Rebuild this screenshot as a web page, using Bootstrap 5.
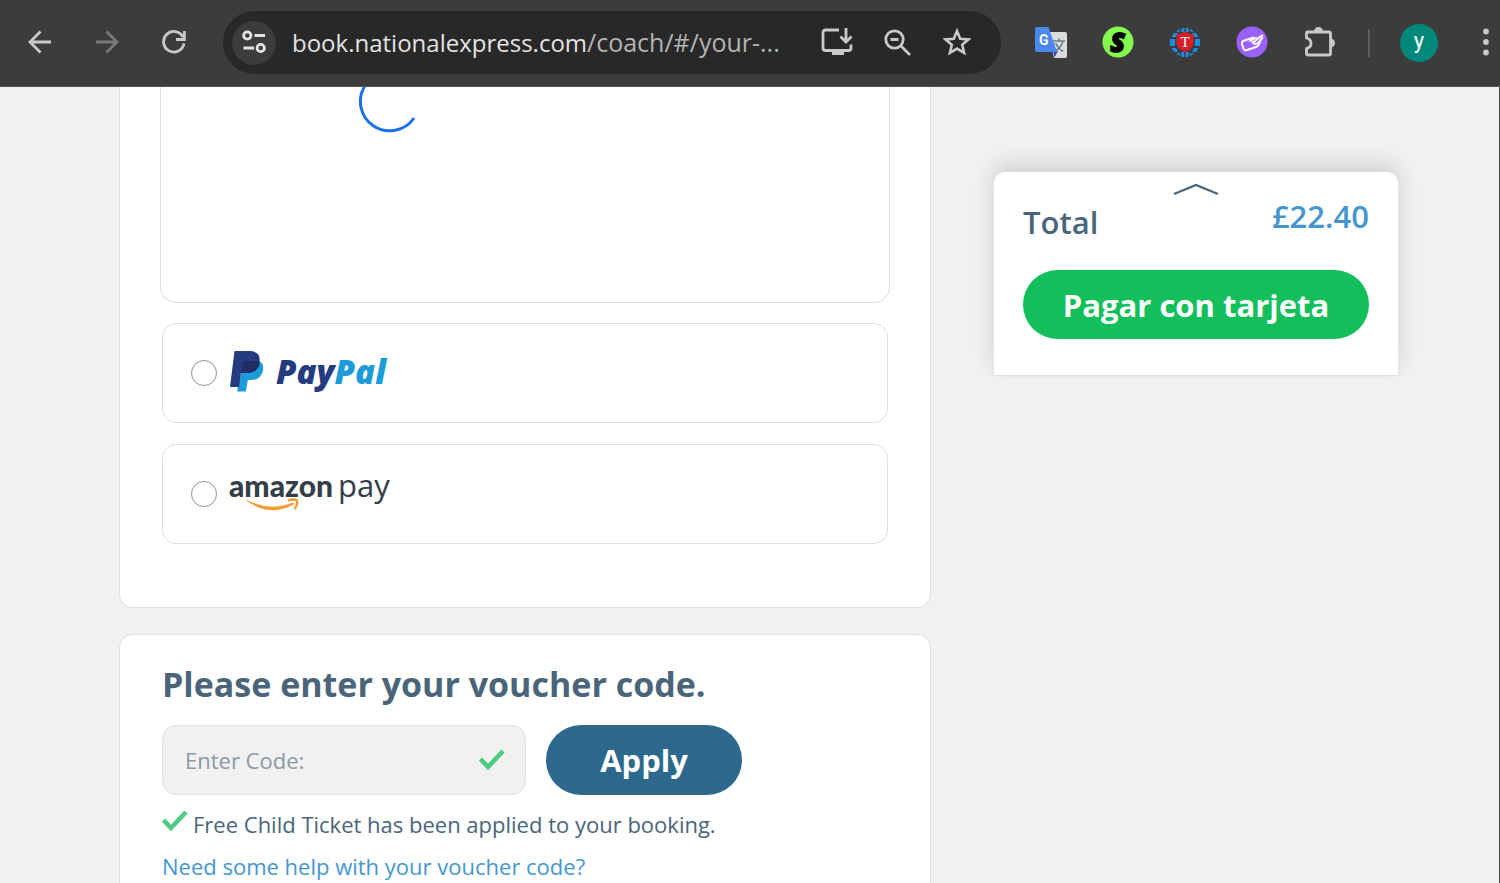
<!DOCTYPE html>
<html lang="en">
<head>
<meta charset="utf-8">
<meta name="viewport" content="width=device-width, initial-scale=1">
<title>National Express – payment</title>
<link href="https://cdn.jsdelivr.net/npm/bootstrap@5.3.0/dist/css/bootstrap.min.css" rel="stylesheet">
<style>
  body { background: #f1f1f1; color: #4a657a; font-family: "Open Sans", sans-serif; font-size: 22px; line-height: 32px; }
  svg { display: block; flex: none; }

  /* browser toolbar */
  .toolbar { background: #3c3c3c; padding: 11px 0 12px 6px; border-bottom: 1px solid #555; }
  .tool { width: 67px; height: 62px; padding: 0 0 1px; border: 0; background: none; color: #c9c9c9; display: flex; align-items: center; justify-content: center; flex: none; }
  .tool-menu { width: 28px; }
  .tool-off { color: #7a7a7a; }
  .address { background: #282828; border-radius: 32px; margin: 0 16px; padding: 0 14px 0 9px; height: 63px; min-width: 0; }
  .address .tool { width: 60px; }
  .address .site-info { width: 44px; height: 44px; border-radius: 50%; background: #3c3c3c; color: #e3e3e3; }
  .url { color: #e3e3e3; font-size: 24px; line-height: 36px; margin-left: 16px; white-space: nowrap; overflow: hidden; }
  .url span { color: #b4b4b4; font-size: 25px; }
  .tool-rule { width: 2px; height: 28px; background: #5c5c5c; margin: 0 30px 0 16px; flex: none; }
  .avatar { width: 38px; height: 38px; border-radius: 50%; border: 0; background: #00897b; color: #fff; font: 22px/34px Roboto, sans-serif; padding: 0 0 4px; margin-right: 34px; flex: none; }

  /* page */
  .checkout { display: grid; grid-template-columns: 2fr 1fr; gap: 62px; padding: 0 100px 0 119px; align-items: start; border-right: 1px solid #4a4a4a; }
  .panel { background: #fff; border: 1px solid #e1e1e1; border-radius: 14px; }
  .panel-pay { border-top: 0; border-radius: 0 0 14px 14px; padding: 0 42px 63px; }
  .panel-voucher { margin-top: 26px; padding: 29px 42px 40px; border-radius: 14px 14px 0 0; border-bottom: 0; }
  .card-frame { border: 1px solid #dfdfdf; border-top: 0; border-radius: 0 0 16px 16px; height: 216px; padding-left: 198px; margin: 0 -2px 20px; }
  .pay-option { border: 1px solid #dfdfdf; border-radius: 14px; height: 100px; padding: 0 28px; margin-bottom: 21px; }
  .pay-option:last-child { margin-bottom: 0; }
  .pay-option .form-check-input { width: 26px; height: 26px; margin: 0; border: 1px solid #8795a1; float: none; flex: none; }
  .pay-option label { padding-left: 12px; }
  .voucher-title { font-size: 34px; line-height: 40px; font-weight: 700; margin-bottom: 21px; }
  .code-box { width: 364px; }
  .code-box .form-control { height: 70px; background: #f1f1f1; border-color: #e1e1e1; border-radius: 14px; font-size: 22px; padding: 0 60px 0 22px; }
  .code-box .form-control::placeholder { color: #8b9aa5; }
  .code-box svg { position: absolute; right: 20px; top: 22px; }
  .btn-pill { border: 0; border-radius: 35px; height: 70px; color: #fff; font-weight: 700; font-size: 31px; line-height: 40px; padding: 0; }
  .btn-apply { width: 196px; background: #2c698d; margin-left: 20px; }
  .btn-pay { background: #12bf5a; height: 69px; }
  .applied { margin: 13px 0 10px; }
  .help-link { color: #4596cf; text-decoration: none; }
  .summary { margin-top: 85px; background: #fff; border: 1px solid #e4e4e4; border-top: 0; border-radius: 12px 12px 0 0; padding: 11px 29px 36px; box-shadow: 0 -8px 24px -2px rgba(0,0,0,.16); clip-path: inset(-40px -40px -1px -40px); }
  .total-row { font-size: 31px; line-height: 40px; font-weight: 600; margin: 2px 0 28px; }
  .total-row output { padding: 0; margin-top: -3px; color: #4596cf; }
  .total-row .total-name { padding-top: 3px; }
</style>
</head>
<body class="overflow-hidden">

<header class="toolbar d-flex align-items-center">
  <button class="tool" aria-label="Back"><svg width="24" height="24" viewBox="0 0 24 24" fill="none" stroke="currentColor" stroke-width="2.800"><path d="M23 12H2M12.500 1.500 2 12l10.500 10.500"/></svg></button>
  <button class="tool tool-off" aria-label="Forward"><svg width="24" height="24" viewBox="0 0 24 24" fill="none" stroke="currentColor" stroke-width="2.800"><path d="M1 12h21M11.500 1.500 22 12 11.500 22.500"/></svg></button>
  <button class="tool" aria-label="Reload"><svg width="24" height="24" viewBox="0 0 24 24" fill="none" stroke="currentColor" stroke-width="2.800"><path d="M22 13.500A10.300 10.300 0 1 1 21 7M22.400 1v8.500H14"/></svg></button>
  <div class="address d-flex align-items-center flex-grow-1">
    <button class="tool site-info" aria-label="Site information"><svg width="24" height="24" viewBox="0 0 24 24" fill="none" stroke="currentColor" stroke-width="2.800"><circle cx="5.300" cy="5.500" r="3.700"/><path d="M12.500 5.500H23M1.500 18H12"/><circle cx="18.700" cy="18" r="3.700"/></svg></button>
    <div class="url flex-grow-1">book.nationalexpress.com<span>/coach/#/your-...</span></div>
    <button class="tool" aria-label="Install app"><svg width="32" height="28" viewBox="0 0 32 28" fill="none" stroke="currentColor" stroke-width="2.800"><path d="M18 2H4.500Q2 2 2 4.500V20q0 2.500 2.500 2.500h23q2.500 0 2.500-2.500v-3.500M25 0v13.500M19.500 8.500 25 14l5.500-5.500"/><path d="M11 22h12v5H11z" fill="currentColor" stroke="none"/></svg></button>
    <button class="tool" aria-label="Zoom"><svg width="27" height="27" viewBox="0 0 27 27" fill="none" stroke="currentColor" stroke-width="2.800"><circle cx="10.500" cy="10.500" r="8.700"/><path d="M6.500 10.500h8M16.500 16.500 26 26"/></svg></button>
    <button class="tool" aria-label="Bookmark"><svg width="28" height="28" viewBox="0 0 28 28" fill="none" stroke="currentColor" stroke-width="2.600"><path d="m14 3 3.200 7.700 8.300.7-6.300 5.400 1.900 8.100L14 20.600l-7.100 4.300 1.900-8.100-6.300-5.400 8.300-.7z"/></svg></button>
  </div>
  <button class="tool" aria-label="Translate"><svg width="32" height="32" viewBox="0 0 32 32"><path d="M13 6h17q2 0 2 2v22q0 2-2 2H19z" fill="#dcdcdc"/><path d="M18 25h5l-3.500 6.500z" fill="#2a47c4"/><path d="M18 15h12M24 12.500V15M28 15q-2 7-8 10M20.500 17q3 6 7.500 8.500" fill="none" stroke="#607d8b" stroke-width="1.500"/><path d="M2 1h11.500L22 26H2q-2 0-2-2V3q0-2 2-2z" fill="#4a88ee"/><text x="4" y="18.500" font-family="Roboto, sans-serif" font-weight="700" font-size="14" fill="#fff">G</text></svg></button>
  <button class="tool" aria-label="S extension"><svg width="32" height="32" viewBox="0 0 32 32"><circle cx="16" cy="16" r="15.500" fill="#83fb4f"/><text x="15.500" y="25.500" text-anchor="middle" font-family="Open Sans, sans-serif" font-weight="800" font-style="italic" font-size="26" fill="#000" stroke="#000" stroke-width="1.800">S</text></svg></button>
  <button class="tool" aria-label="T extension"><svg width="30" height="30" viewBox="0 0 30 30"><g fill="#1a8fe8"><path d="M0 12h5v7H0zM25 12h5v7h-5zM1.500 10 4 6h4L6 10zM28.500 10 26 6h-4l2 4zM1.500 21 4 25h4l-2-4zM28.500 21 26 25h-4l2-4zM6 4.500 10.500 1.500 9 5zM24 4.500 19.500 1.500 21 5zM6 26.500l5 3L9.500 26zM24 26.500l-5 3 1.500-3.500zM12 1h2.300v4H11zM15.700 1H18l1 4h-3.300zM11 25h3.300v5H12zM15.700 25H19l-1 5h-2.300z"/></g><path d="M15 4.500Q19 7 23.500 7.500V16q0 5-8.500 9.500Q6.500 21 6.500 16V7.500Q11 7 15 4.500z" fill="#d51f2b"/><text x="15" y="20" text-anchor="middle" font-family="Liberation Serif, serif" font-size="15" fill="#fff">T</text></svg></button>
  <button class="tool" aria-label="Coupon extension"><svg width="32" height="32" viewBox="0 0 32 32"><circle cx="16" cy="16" r="15.500" fill="#9a62f8"/><path d="M17.500 11.500 8.500 14.500Q5 15.500 6 18l1.500 4.500q1 2.500 3.500 1.500l9-3q2-.7 3-2.500l1.800-4.500M26.500 9.500q-3.500 1-5.500 4-2 2.500-4.500 2.800 1.500 2.500 4.500 1.200 2.500-1.500 3.500-4l2-1.500M14 15l6-3" fill="none" stroke="#fff" stroke-width="1.900" stroke-linecap="round" stroke-linejoin="round"/></svg></button>
  <button class="tool" aria-label="Extensions"><svg width="32" height="32" viewBox="0 0 32 32"><path d="M4 6h22q1.500 0 1.500 1.500v20q0 1.500-1.500 1.500H5q-1.500 0-1.500-1.500V22.500Q8 21.500 8 17.300T3.500 12V7.500Q3.500 6 5 6z" fill="none" stroke="currentColor" stroke-width="2.800"/><path d="M11 5.500a4.500 4.500 0 0 1 9 0zM27.500 12.500a4.500 4.500 0 0 1 0 9z" fill="currentColor"/></svg></button>
  <span class="tool-rule"></span>
  <button class="avatar" aria-label="Profile">y</button>
  <button class="tool tool-menu" aria-label="Menu"><svg width="6" height="28" viewBox="0 0 6 28" fill="currentColor"><circle cx="3" cy="3.500" r="2.900"/><circle cx="3" cy="14" r="2.900"/><circle cx="3" cy="24.500" r="2.900"/></svg></button>
</header>

<div class="checkout">
  <main>
    <section class="panel panel-pay">
      <div class="card-frame" role="status" aria-label="Loading">
        <svg width="62" height="48" viewBox="0 0 62 48"><path d="M6.500-2A28.500 28.500 0 0 0 55 31" fill="none" stroke="#1a6ff0" stroke-width="3"/></svg>
      </div>
      <div class="pay-option d-flex align-items-center">
        <input class="form-check-input" type="radio" name="method" id="paypal">
        <label for="paypal"><svg width="172" height="60" viewBox="0 -4 172 60" role="img" aria-label="PayPal">
          <path d="M15 14h15q5.500 3 3.800 10-2 9-12 9h-3l-2 11.500H8z" fill="#1b9bd9"/>
          <path d="M5.500 4H20q12 0 10.500 11-1.500 11-13.500 11h-5l-2 14H1z" fill="#253b80"/>
          <path d="M14.500 14H30q.8 1 .4 3.500Q28 26 17 26h-4.500z" fill="#222d65"/>
          <text x="47" y="37" font-family="Open Sans, sans-serif" font-weight="800" font-style="italic" font-size="33" fill="#253b80">Pay<tspan fill="#1b9bd9">Pal</tspan></text></svg></label>
      </div>
      <div class="pay-option d-flex align-items-center">
        <input class="form-check-input" type="radio" name="method" id="amazon">
        <label for="amazon"><svg width="172" height="64" viewBox="0 -8 172 64" role="img" aria-label="Amazon Pay">
          <text x="0" y="27" font-family="Lato, sans-serif" font-weight="900" font-size="30" fill="#333e48">amazon</text>
          <text x="109" y="27" font-family="Open Sans, sans-serif" font-size="31" fill="#333e48">pay</text>
          <path d="M15 28.500q25 14 49 4l1.500 1.500Q39 49 15 28.500z" fill="#f79b34"/><path d="M59 30.500q6-2 9 0 1 4-2.500 8.500" fill="none" stroke="#f79b34" stroke-width="2.400"/></svg></label>
      </div>
    </section>

    <section class="panel panel-voucher">
      <h2 class="voucher-title">Please enter your voucher code.</h2>
      <form class="d-flex">
        <div class="code-box position-relative">
          <input class="form-control" type="text" placeholder="Enter Code:" aria-label="Enter Code">
          <svg width="28" height="24" viewBox="0 0 28 24"><path d="m2.500 12 7.500 8L25 4" fill="none" stroke="#4bcc80" stroke-width="4.600"/></svg>
        </div>
        <button class="btn btn-pill btn-apply" type="button">Apply</button>
      </form>
      <div class="applied d-flex"><svg width="31" height="24" viewBox="0 0 31 24"><path d="m1.500 12 7.500 8L24 4" fill="none" stroke="#4bcc80" stroke-width="4.600"/></svg><span>Free Child Ticket has been applied to your booking.</span></div>
      <a class="help-link" href="#">Need some help with your voucher code?</a>
    </section>
  </main>

  <aside class="summary">
    <svg class="mx-auto" width="46" height="14" viewBox="0 0 46 14"><path d="M1 11 23 2l22 9" fill="none" stroke="#4a657a" stroke-width="2.400"/></svg>
    <div class="total-row d-flex justify-content-between"><span class="total-name">Total</span><output>£22.40</output></div>
    <button class="btn btn-pill btn-pay w-100" type="button">Pagar con tarjeta</button>
  </aside>
</div>

<script src="https://cdn.jsdelivr.net/npm/bootstrap@5.3.0/dist/js/bootstrap.bundle.min.js"></script>
</body>
</html>
